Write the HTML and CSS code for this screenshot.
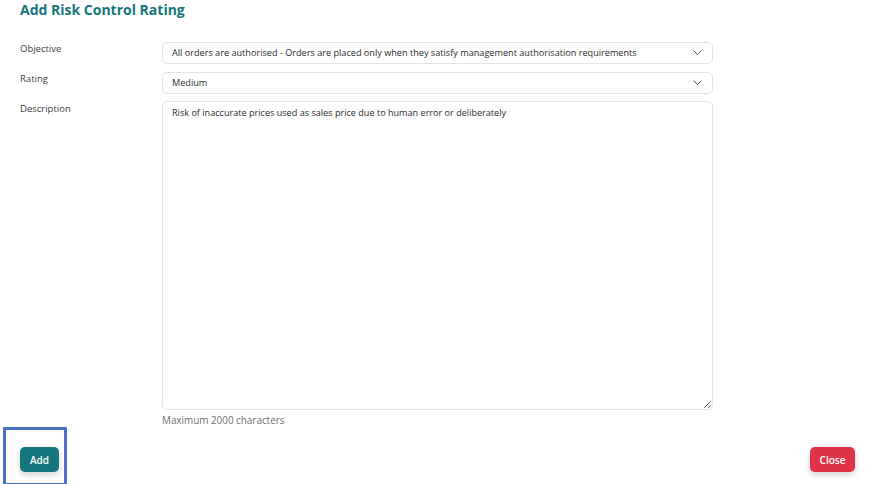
FILE: index.html
```html
<!DOCTYPE html>
<html>
<head>
<meta charset="utf-8">
<link rel="stylesheet" href="styles.css">
</head>
<body>
<div class="modal">
  <h1 class="title">Add Risk Control Rating</h1>
  <div class="form">
    <label class="label">Objective</label>
    <div class="control select-wrap">
      <div class="select">All orders are authorised - Orders are placed only when they satisfy management authorisation requirements</div>
      <svg class="chev" width="10" height="6" viewBox="0 0 10 6"><path d="M1 1 L5 5 L9 1" fill="none" stroke="#3a3a3a" stroke-width="1" stroke-linecap="round" stroke-linejoin="round"/></svg>
    </div>
    <label class="label">Rating</label>
    <div class="control select-wrap">
      <div class="select">Medium</div>
      <svg class="chev" width="10" height="6" viewBox="0 0 10 6"><path d="M1 1 L5 5 L9 1" fill="none" stroke="#3a3a3a" stroke-width="1" stroke-linecap="round" stroke-linejoin="round"/></svg>
    </div>
    <label class="label">Description</label>
    <div class="control">
      <textarea class="textarea">Risk of inaccurate prices used as sales price due to human error or deliberately</textarea>
      <div class="hint">Maximum 2000 characters</div>
    </div>
  </div>
  <div class="footer">
    <button class="btn btn-add">Add</button>
    <button class="btn btn-close">Close</button>
  </div>
</div>
<div class="highlight"></div>
</body>
</html>
```

FILE: styles.css
```css
html, body {
  margin: 0;
  padding: 0;
  background: #ffffff;
  width: 872px;
  height: 484px;
  overflow: hidden;
}
body {
  font-family: "Open Sans", "DejaVu Sans", sans-serif;
  color: #333;
  position: relative;
}
.modal {
  padding: 0 17px 0 20px;
}
.title {
  margin: 0;
  padding-top: 1px;
  font-size: 14px;
  font-weight: 700;
  color: #16757d;
  line-height: 18px;
}
.form {
  display: grid;
  grid-template-columns: 142px 551px;
  row-gap: 8px;
  margin-top: 23px;
}
.label {
  font-size: 9.5px;
  color: #3d3d3d;
  line-height: 14px;
}
.select-wrap {
  position: relative;
}
.select {
  box-sizing: border-box;
  height: 22px;
  border: 1px solid #e4e4e4;
  border-radius: 5px;
  padding: 0 30px 0 9px;
  font-size: 9.15px;
  line-height: 20px;
  color: #2b2b2b;
  white-space: nowrap;
  overflow: hidden;
}
.chev {
  position: absolute;
  right: 11px;
  top: 8px;
  width: 9px;
  height: 5.5px;
}
.textarea {
  display: block;
  box-sizing: border-box;
  width: 551px;
  height: 309px;
  margin: -1px 0 0;
  border: 1px solid #e4e4e4;
  border-radius: 5px;
  padding: 5px 9px;
  font-family: "Open Sans", "DejaVu Sans", sans-serif;
  font-size: 9.1px;
  line-height: 12px;
  color: #2b2b2b;
  resize: vertical;
  outline: none;
}
.hint {
  font-size: 9.9px;
  color: #707070;
  margin-top: 4px;
  line-height: 13px;
}
.footer {
  display: flex;
  justify-content: space-between;
  margin-top: 20px;
}
.btn {
  height: 25px;
  border: none;
  border-radius: 5px;
  color: #fff;
  font-family: "Open Sans", "DejaVu Sans", sans-serif;
  font-size: 10px;
  font-weight: 600;
  padding: 0;
  box-shadow: 0 3px 6px rgba(0,0,0,0.18);
}
.btn-add {
  background: #15767e;
  width: 39px;
}
.btn-close {
  background: #de3348;
  width: 45px;
}
.highlight {
  position: absolute;
  left: 3px;
  top: 427px;
  width: 58px;
  height: 53px;
  border: 3px solid #4870c4;
}
```
